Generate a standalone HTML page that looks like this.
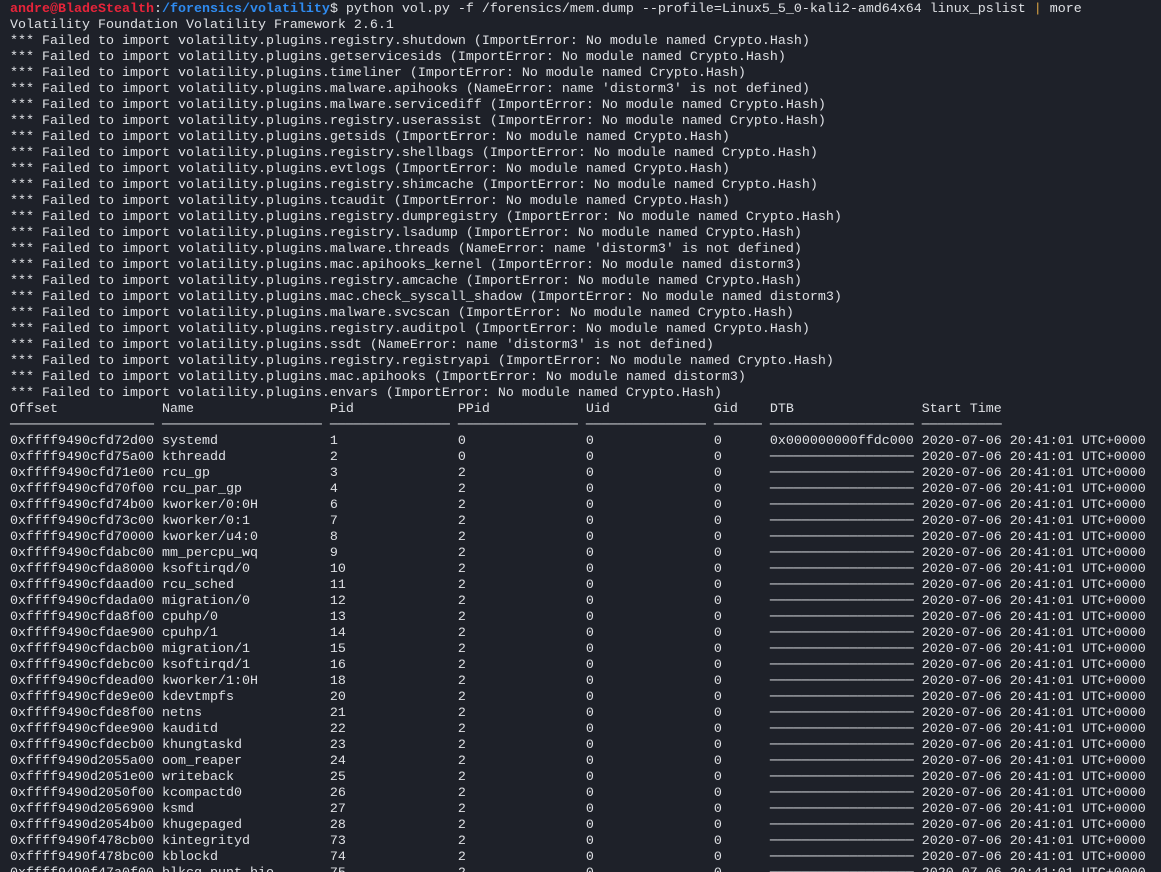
<!DOCTYPE html>
<html><head><meta charset="utf-8"><style>
html,body{margin:0;padding:0;background:#1e2129;width:1161px;height:872px;overflow:hidden}
pre{margin:0;padding:2px 0 0 10px;font-family:"Liberation Mono","DejaVu Sans Mono",monospace;font-size:13.33px;line-height:16px;color:#dfe1e5;white-space:pre}
.r{color:#e8243a;font-weight:bold}.b{color:#2f8bf0;font-weight:bold}.y{color:#d9a244}
</style></head><body><pre><span class="r">andre@BladeStealth</span>:<span class="b">/forensics/volatility</span>$ python vol.py -f /forensics/mem.dump --profile=Linux5_5_0-kali2-amd64x64 linux_pslist <span class="y">|</span> more
Volatility Foundation Volatility Framework 2.6.1
*** Failed to import volatility.plugins.registry.shutdown (ImportError: No module named Crypto.Hash)
*** Failed to import volatility.plugins.getservicesids (ImportError: No module named Crypto.Hash)
*** Failed to import volatility.plugins.timeliner (ImportError: No module named Crypto.Hash)
*** Failed to import volatility.plugins.malware.apihooks (NameError: name 'distorm3' is not defined)
*** Failed to import volatility.plugins.malware.servicediff (ImportError: No module named Crypto.Hash)
*** Failed to import volatility.plugins.registry.userassist (ImportError: No module named Crypto.Hash)
*** Failed to import volatility.plugins.getsids (ImportError: No module named Crypto.Hash)
*** Failed to import volatility.plugins.registry.shellbags (ImportError: No module named Crypto.Hash)
*** Failed to import volatility.plugins.evtlogs (ImportError: No module named Crypto.Hash)
*** Failed to import volatility.plugins.registry.shimcache (ImportError: No module named Crypto.Hash)
*** Failed to import volatility.plugins.tcaudit (ImportError: No module named Crypto.Hash)
*** Failed to import volatility.plugins.registry.dumpregistry (ImportError: No module named Crypto.Hash)
*** Failed to import volatility.plugins.registry.lsadump (ImportError: No module named Crypto.Hash)
*** Failed to import volatility.plugins.malware.threads (NameError: name 'distorm3' is not defined)
*** Failed to import volatility.plugins.mac.apihooks_kernel (ImportError: No module named distorm3)
*** Failed to import volatility.plugins.registry.amcache (ImportError: No module named Crypto.Hash)
*** Failed to import volatility.plugins.mac.check_syscall_shadow (ImportError: No module named distorm3)
*** Failed to import volatility.plugins.malware.svcscan (ImportError: No module named Crypto.Hash)
*** Failed to import volatility.plugins.registry.auditpol (ImportError: No module named Crypto.Hash)
*** Failed to import volatility.plugins.ssdt (NameError: name 'distorm3' is not defined)
*** Failed to import volatility.plugins.registry.registryapi (ImportError: No module named Crypto.Hash)
*** Failed to import volatility.plugins.mac.apihooks (ImportError: No module named distorm3)
*** Failed to import volatility.plugins.envars (ImportError: No module named Crypto.Hash)
Offset             Name                 Pid             PPid            Uid             Gid    DTB                Start Time
────────────────── ──────────────────── ─────────────── ─────────────── ─────────────── ────── ────────────────── ──────────
0xffff9490cfd72d00 systemd              1               0               0               0      0x000000000ffdc000 2020-07-06 20:41:01 UTC+0000
0xffff9490cfd75a00 kthreadd             2               0               0               0      ────────────────── 2020-07-06 20:41:01 UTC+0000
0xffff9490cfd71e00 rcu_gp               3               2               0               0      ────────────────── 2020-07-06 20:41:01 UTC+0000
0xffff9490cfd70f00 rcu_par_gp           4               2               0               0      ────────────────── 2020-07-06 20:41:01 UTC+0000
0xffff9490cfd74b00 kworker/0:0H         6               2               0               0      ────────────────── 2020-07-06 20:41:01 UTC+0000
0xffff9490cfd73c00 kworker/0:1          7               2               0               0      ────────────────── 2020-07-06 20:41:01 UTC+0000
0xffff9490cfd70000 kworker/u4:0         8               2               0               0      ────────────────── 2020-07-06 20:41:01 UTC+0000
0xffff9490cfdabc00 mm_percpu_wq         9               2               0               0      ────────────────── 2020-07-06 20:41:01 UTC+0000
0xffff9490cfda8000 ksoftirqd/0          10              2               0               0      ────────────────── 2020-07-06 20:41:01 UTC+0000
0xffff9490cfdaad00 rcu_sched            11              2               0               0      ────────────────── 2020-07-06 20:41:01 UTC+0000
0xffff9490cfdada00 migration/0          12              2               0               0      ────────────────── 2020-07-06 20:41:01 UTC+0000
0xffff9490cfda8f00 cpuhp/0              13              2               0               0      ────────────────── 2020-07-06 20:41:01 UTC+0000
0xffff9490cfdae900 cpuhp/1              14              2               0               0      ────────────────── 2020-07-06 20:41:01 UTC+0000
0xffff9490cfdacb00 migration/1          15              2               0               0      ────────────────── 2020-07-06 20:41:01 UTC+0000
0xffff9490cfdebc00 ksoftirqd/1          16              2               0               0      ────────────────── 2020-07-06 20:41:01 UTC+0000
0xffff9490cfdead00 kworker/1:0H         18              2               0               0      ────────────────── 2020-07-06 20:41:01 UTC+0000
0xffff9490cfde9e00 kdevtmpfs            20              2               0               0      ────────────────── 2020-07-06 20:41:01 UTC+0000
0xffff9490cfde8f00 netns                21              2               0               0      ────────────────── 2020-07-06 20:41:01 UTC+0000
0xffff9490cfdee900 kauditd              22              2               0               0      ────────────────── 2020-07-06 20:41:01 UTC+0000
0xffff9490cfdecb00 khungtaskd           23              2               0               0      ────────────────── 2020-07-06 20:41:01 UTC+0000
0xffff9490d2055a00 oom_reaper           24              2               0               0      ────────────────── 2020-07-06 20:41:01 UTC+0000
0xffff9490d2051e00 writeback            25              2               0               0      ────────────────── 2020-07-06 20:41:01 UTC+0000
0xffff9490d2050f00 kcompactd0           26              2               0               0      ────────────────── 2020-07-06 20:41:01 UTC+0000
0xffff9490d2056900 ksmd                 27              2               0               0      ────────────────── 2020-07-06 20:41:01 UTC+0000
0xffff9490d2054b00 khugepaged           28              2               0               0      ────────────────── 2020-07-06 20:41:01 UTC+0000
0xffff9490f478cb00 kintegrityd          73              2               0               0      ────────────────── 2020-07-06 20:41:01 UTC+0000
0xffff9490f478bc00 kblockd              74              2               0               0      ────────────────── 2020-07-06 20:41:01 UTC+0000
0xffff9490f47a0f00 blkcg_punt_bio       75              2               0               0      ────────────────── 2020-07-06 20:41:01 UTC+0000</pre></body></html>
